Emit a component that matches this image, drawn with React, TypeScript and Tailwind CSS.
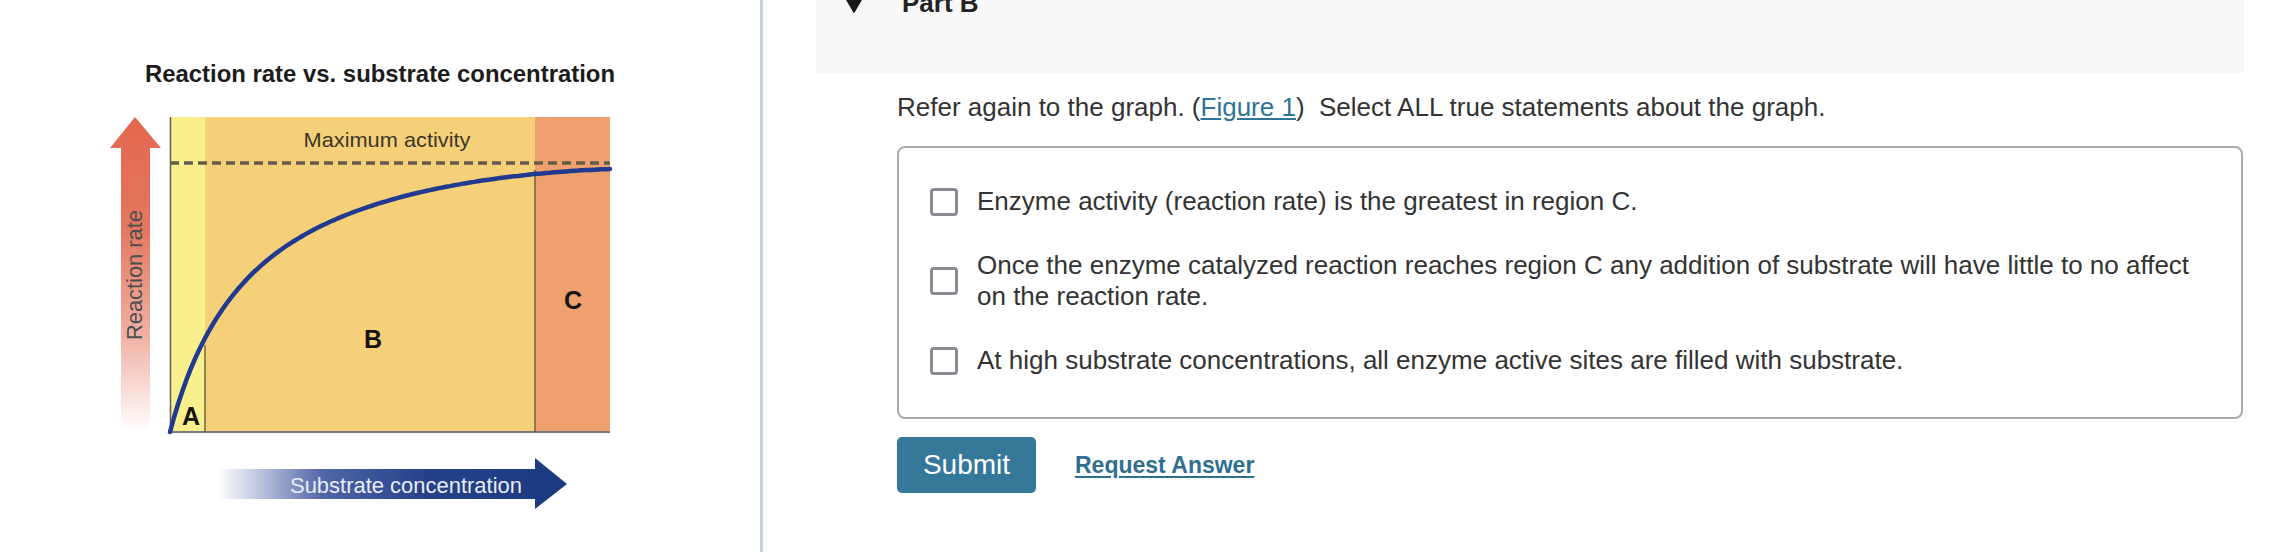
import React from "react";

const FONT = "'Liberation Sans', Arial, Helvetica, sans-serif";

// reaction rate curve, roughly michaelis-menten, flattened near the end
function curvePath() {
  const pts: string[] = [];
  for (let u = 0; u <= 440; u += 4) {
    const r = (1.198 * u) / (85.2 + u) - 0.026 * Math.pow(u / 440, 4);
    const y = 432 - 269 * r;
    pts.push(`${170 + u},${y.toFixed(1)}`);
  }
  return "M" + pts.join(" L");
}

function Figure() {
  return (
    <svg width="760" height="552" viewBox="0 0 760 552" fontFamily={FONT}>
      <defs>
        <linearGradient id="upArrow" x1="0" y1="117" x2="0" y2="432" gradientUnits="userSpaceOnUse">
          <stop offset="0" stopColor="#e2684f" />
          <stop offset="0.35" stopColor="#e4765f" />
          <stop offset="0.7" stopColor="#f0b2a5" />
          <stop offset="1" stopColor="#ffffff" />
        </linearGradient>
        <linearGradient id="rightArrow" x1="217" y1="0" x2="567" y2="0" gradientUnits="userSpaceOnUse">
          <stop offset="0" stopColor="#ffffff" />
          <stop offset="0.1" stopColor="#c9d0e5" />
          <stop offset="0.3" stopColor="#5166a6" />
          <stop offset="0.6" stopColor="#26418a" />
          <stop offset="1" stopColor="#1b3a80" />
        </linearGradient>
      </defs>

      <text x="380" y="82" textAnchor="middle" fontSize="24" fontWeight="700" fill="#1c1c1c" textLength="470" lengthAdjust="spacingAndGlyphs">
        Reaction rate vs. substrate concentration
      </text>

      {/* y axis arrow */}
      <path d="M135 117 L161 148 L150 148 L150 432 L121 432 L121 148 L110 148 Z" fill="url(#upArrow)" />
      <text transform="translate(141.5 275) rotate(-90)" textAnchor="middle" fontSize="22" fill="#4e4e4e" textLength="130" lengthAdjust="spacingAndGlyphs">
        Reaction rate
      </text>

      {/* regions */}
      <rect x="170" y="117" width="35" height="315" fill="#f9ef8c" />
      <rect x="205" y="117" width="330" height="315" fill="#f6cf79" />
      <rect x="535" y="117" width="75" height="315" fill="#f0a06f" />

      <line x1="170.5" y1="117" x2="170.5" y2="432" stroke="#5e5e5e" strokeWidth="1.5" />
      <line x1="170" y1="432" x2="610" y2="432" stroke="#7a7a7a" strokeWidth="2" />
      <line x1="205" y1="345" x2="205" y2="432" stroke="#5a5840" strokeWidth="1.3" />
      <line x1="535" y1="170" x2="535" y2="432" stroke="#5a5840" strokeWidth="1.3" />

      <line x1="170" y1="163" x2="610" y2="163" stroke="#635c4a" strokeWidth="3.5" strokeDasharray="9 5" />

      <text x="387" y="147" textAnchor="middle" fontSize="21" fill="#3a3828" textLength="167" lengthAdjust="spacingAndGlyphs">
        Maximum activity
      </text>

      <path d={curvePath()} fill="none" stroke="#1f3a8f" strokeWidth="4.5" strokeLinecap="round" />

      <text x="191" y="425" textAnchor="middle" fontSize="25" fontWeight="700" fill="#141414">A</text>
      <text x="373" y="348" textAnchor="middle" fontSize="25" fontWeight="700" fill="#141414">B</text>
      <text x="573" y="309" textAnchor="middle" fontSize="25" fontWeight="700" fill="#141414">C</text>

      {/* x axis arrow */}
      <path d="M217 469 L535 469 L535 458 L567 484 L535 509 L535 499 L217 499 Z" fill="url(#rightArrow)" />
      <text x="290" y="493" fontSize="22" fill="#e8ecf6" textLength="232" lengthAdjust="spacingAndGlyphs">
        Substrate concentration
      </text>
    </svg>
  );
}

const options = [
  "Enzyme activity (reaction rate) is the greatest in region C.",
  "Once the enzyme catalyzed reaction reaches region C any addition of substrate will have little to no affect on the reaction rate.",
  "At high substrate concentrations, all enzyme active sites are filled with substrate.",
];

export default function App() {
  return (
    <div className="flex h-[552px] w-[2272px] overflow-hidden bg-white font-['Liberation_Sans',Arial,sans-serif] text-[#333]">
      <div className="w-[760px] shrink-0">
        <Figure />
      </div>
      <div className="w-[3px] shrink-0 bg-[#c6d1e0]" />

      <div className="min-w-0 flex-1">
        {/* Part header, scrolled partly out of view */}
        <div className="ml-[53px] mr-[28px] h-[73px] overflow-hidden bg-[#f8f8f8]">
          <div className="-mt-[12px] flex items-center pl-[27px] text-[26px] font-bold leading-[30px] text-[#222]">
            <svg width="22" height="19" viewBox="0 0 22 19">
              <path d="M1 1 L21 1 L11 18 Z" fill="#1a1a1a" stroke="#1a1a1a" strokeWidth="1.5" strokeLinejoin="round" />
            </svg>
            <span className="ml-[37px]">Part B</span>
          </div>
        </div>

        <div className="ml-[134px] mr-[29px]">
          <p className="mt-[18px] text-[26px] leading-[32px]">
            Refer again to the graph. (
            <a className="text-[#2f7396] underline">Figure 1</a>)&nbsp; Select ALL true statements about the graph.
          </p>

          <div className="mt-[23px] flex flex-col gap-[33px] rounded-[8px] border-2 border-[#aaaaaa] px-[31px] pt-[38px] pb-[41px]">
            {options.map((text) => (
              <label key={text} className="flex items-center gap-[19px]">
                <span className="size-[28px] shrink-0 rounded-[4px] border-[3px] border-[#8b8b96] bg-white" />
                <span className="text-[26px] leading-[31px]">{text}</span>
              </label>
            ))}
          </div>

          <div className="mt-[18px] flex items-center gap-[39px]">
            <button className="h-[56px] w-[139px] rounded-[5px] bg-[#36789a] text-[28px] text-white">
              Submit
            </button>
            <a className="text-[23px] font-bold text-[#2e6f90] underline underline-offset-[3px]">
              Request Answer
            </a>
          </div>
        </div>
      </div>
    </div>
  );
}
